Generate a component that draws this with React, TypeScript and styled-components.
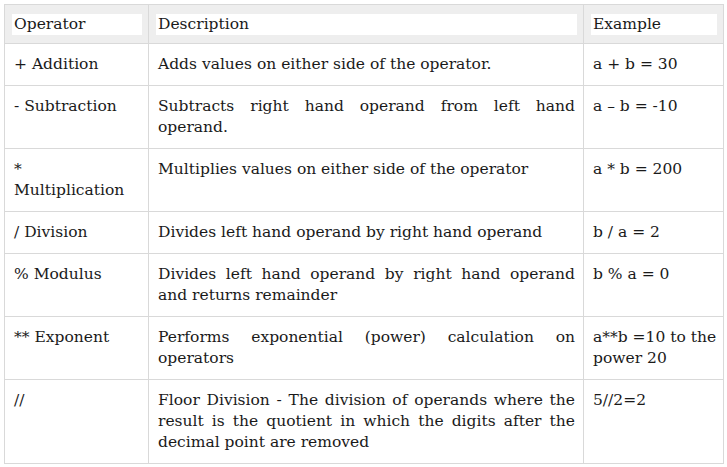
import React from 'react';
import styled, { createGlobalStyle } from 'styled-components';

const GlobalStyle = createGlobalStyle`
  html, body {
    margin: 0;
    padding: 0;
    background: #ffffff;
  }
  body {
    font-family: 'DejaVu Serif', 'Liberation Serif', serif;
    color: #1a1a1a;
  }
`;

const Page = styled.div`
  padding: 4px 0 0 4px;
`;

const Table = styled.table`
  width: 719px;
  border-collapse: collapse;
  table-layout: fixed;
  font-size: 15.5px;
  line-height: 21px;
`;

const HeadCell = styled.th`
  background: #eeeeee;
  border: 1px solid #d9d9d9;
  padding: 9px 6px 8px 7px;
  text-align: left;
  font-weight: normal;
  vertical-align: top;
`;

const HeadLabel = styled.div`
  background: #ffffff;
  padding: 0 2px;
`;

const Cell = styled.td`
  border: 1px solid #d9d9d9;
  padding: 10px 8px 10px 9px;
  vertical-align: top;
  text-align: left;
`;

// Word-style justified paragraph: every line but the last is stretched to full width
const Line = styled.div<{ $stretch?: boolean }>`
  white-space: nowrap;
  text-align: ${({ $stretch }) => ($stretch ? 'justify' : 'left')};
  text-align-last: ${({ $stretch }) => ($stretch ? 'justify' : 'left')};
`;

interface Row {
  op: string[];
  desc: string[];
  ex: string[];
}

const rows: Row[] = [
  { op: ['+ Addition'], desc: ['Adds values on either side of the operator.'], ex: ['a + b = 30'] },
  {
    op: ['- Subtraction'],
    desc: ['Subtracts right hand operand from left hand', 'operand.'],
    ex: ['a – b = -10'],
  },
  { op: ['*', 'Multiplication'], desc: ['Multiplies values on either side of the operator'], ex: ['a * b = 200'] },
  { op: ['/ Division'], desc: ['Divides left hand operand by right hand operand'], ex: ['b / a = 2'] },
  {
    op: ['% Modulus'],
    desc: ['Divides left hand operand by right hand operand', 'and returns remainder'],
    ex: ['b % a = 0'],
  },
  {
    op: ['** Exponent'],
    desc: ['Performs exponential (power) calculation on', 'operators'],
    ex: ['a**b =10 to the', 'power 20'],
  },
  {
    op: ['//'],
    desc: [
      'Floor Division - The division of operands where the',
      'result is the quotient in which the digits after the',
      'decimal point are removed',
    ],
    ex: ['5//2=2'],
  },
];

const Lines: React.FC<{ lines: string[]; justify?: boolean }> = ({ lines, justify }) => (
  <>
    {lines.map((l, i) => (
      <Line key={i} $stretch={justify && i < lines.length - 1}>
        {l}
      </Line>
    ))}
  </>
);

export default function App() {
  return (
    <>
      <GlobalStyle />
      <Page>
        <Table>
          <colgroup>
            <col style={{ width: 144 }} />
            <col style={{ width: 435 }} />
            <col style={{ width: 140 }} />
          </colgroup>
          <thead>
            <tr>
              <HeadCell><HeadLabel>Operator</HeadLabel></HeadCell>
              <HeadCell><HeadLabel>Description</HeadLabel></HeadCell>
              <HeadCell><HeadLabel>Example</HeadLabel></HeadCell>
            </tr>
          </thead>
          <tbody>
            {rows.map((r) => (
              <tr key={r.op.join(' ')}>
                <Cell><Lines lines={r.op} /></Cell>
                <Cell><Lines lines={r.desc} justify /></Cell>
                <Cell><Lines lines={r.ex} /></Cell>
              </tr>
            ))}
          </tbody>
        </Table>
      </Page>
    </>
  );
}
